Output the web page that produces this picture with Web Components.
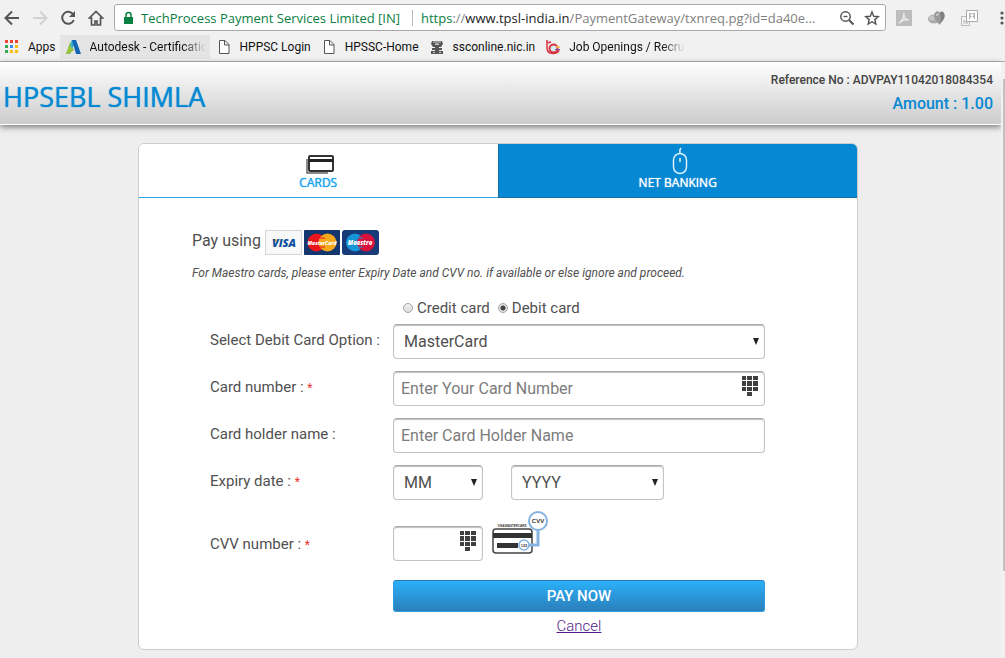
<!DOCTYPE html>
<html lang="en">
<head>
<meta charset="utf-8">
<title>HPSEBL SHIMLA - Payment</title>
<style>
  body {
    margin: 0;
    min-height: 100vh;
    display: flex;
    flex-direction: column;
    background: #eee;
    color: #444;
    font-family: Roboto, "Liberation Sans", sans-serif;
  }
  main {
    flex: 1;
    display: flex;
  }
  .page {
    flex: 1;
    min-width: 0;
  }
</style>
</head>
<body>
  <browser-toolbar></browser-toolbar>
  <bookmarks-bar></bookmarks-bar>
  <main>
    <div class="page">
      <merchant-header>
        <span slot="name">HPSEBL SHIMLA</span>
        <span slot="reference">Reference No : ADVPAY11042018084354</span>
        <span slot="amount">Amount : 1.00</span>
      </merchant-header>
      <payment-card>
        <payment-tabs slot="tabs"></payment-tabs>
        <card-form></card-form>
      </payment-card>
    </div>
    <scroll-rail></scroll-rail>
  </main>

<script>

function define(name, html) {
  const template = document.createElement('template')
  template.innerHTML = html
  window.customElements.define(name, class extends HTMLElement {
    constructor() {
      super()
      this.attachShadow({ mode: 'open' })
      this.shadowRoot.appendChild(template.content.cloneNode(true))
    }
  })
}

// browser chrome

define('browser-toolbar', `
  <style>
    :host {
      display: flex;
      align-items: center;
      height: 35px;
      padding-left: 4px;
      background: #f1f1f1;
      overflow: hidden;
      font: 13px/20px "Open Sans", "Noto Sans", sans-serif;
    }
    button {
      display: flex;
      align-items: center;
      padding: 0;
      border: 0;
      background: none;
      font: inherit;
      color: inherit;
    }
    svg { display: block; }
    .nav { display: flex; gap: 12px; margin-right: 10px; }
    .omnibox {
      flex: 1;
      min-width: 0;
      display: flex;
      align-items: center;
      height: 25px;
      padding: 0 5px 0 6px;
      border: 1px solid #a9a9a9;
      border-radius: 3px;
      background: #fff;
    }
    .secure { gap: 5px; color: #0b8043; white-space: nowrap; }
    .line { width: 1px; height: 16px; margin: 0 8px 0 12px; background: #bbb; }
    .url {
      flex: 1;
      min-width: 0;
      color: #808080;
      white-space: nowrap;
      overflow: hidden;
      outline: 0;
    }
    .url b { font-weight: 400; color: #222; }
    .url i { font-style: normal; color: #0b8043; }
    .omnibox .zoom { margin: 0 9px 0 10px; }
    .extensions { display: flex; gap: 16px; margin-left: 10px; }
    .more { margin-left: 18px; width: 9px; overflow: hidden; }
  </style>
  <div class="nav">
    <button aria-label="Back"><svg width="16" height="18" viewBox="0 0 16 18"><path d="M15 9H2M8 2.500L1.500 9 8 15.500" fill="none" stroke="#555" stroke-width="2"/></svg></button>
    <button aria-label="Forward"><svg width="16" height="18" viewBox="0 0 16 18"><path d="M1 9h13M8 2.500L14.500 9 8 15.500" fill="none" stroke="#d2d2d2" stroke-width="2"/></svg></button>
    <button aria-label="Reload"><svg width="16" height="18" viewBox="0 0 16 18"><path d="M13.200 5.500A6 6 0 1 0 13.800 11" fill="none" stroke="#555" stroke-width="2"/><path d="M15 2v6H9z" fill="#555"/></svg></button>
    <button aria-label="Home"><svg width="16" height="18" viewBox="0 0 16 18"><path d="M3.500 9v7H7v-4h2v4h3.500V9h2L8 2.500 1.500 9z" fill="none" stroke="#555" stroke-width="1.700"/></svg></button>
  </div>
  <div class="omnibox">
    <button class="secure">
      <svg width="15" height="16" viewBox="0 0 15 16"><path d="M3 7h9v7H3z" fill="#0b8043"/><path d="M5 7V5a2.500 2.500 0 0 1 5 0v2" fill="none" stroke="#0b8043" stroke-width="1.500"/></svg>
      TechProcess Payment Services Limited [IN]
    </button>
    <span class="line"></span>
    <div class="url" role="textbox" aria-label="Address" contenteditable="true" spellcheck="false"><i>https</i>://<b>www.tpsl-india.in</b>/PaymentGateway/txnreq.pg?id=da40e...</div>
    <button class="zoom" aria-label="Zoom"><svg width="16" height="16" viewBox="0 0 16 16"><circle cx="6.500" cy="6.500" r="4.700" fill="none" stroke="#555" stroke-width="1.500"/><path d="M4.500 6.500h4" stroke="#555" stroke-width="1.300"/><path d="M10 10l4.500 4.500" stroke="#555" stroke-width="2"/></svg></button>
    <button aria-label="Bookmark this page"><svg width="16" height="16" viewBox="0 0 16 16"><path d="M8 2l1.700 4.300 4.600.3-3.500 3 1.100 4.500L8 11.700l-3.900 2.400 1.100-4.500-3.500-3 4.600-.3z" fill="none" stroke="#555" stroke-width="1.400"/></svg></button>
  </div>
  <div class="extensions">
    <button aria-label="PDF"><svg width="16" height="16"><path d="M0 0h16v16H0z" fill="#bdbdbd"/><path d="M3 13c3-2 5-6 5-10-1 4 2 7 5 7-3-1-7 0-10 3z" fill="none" stroke="#f4f4f4" stroke-width="1.200"/></svg></button>
    <button aria-label="Download"><svg width="17" height="16" viewBox="0 0 17 16"><ellipse cx="6" cy="9" rx="6" ry="4.500" fill="#aaa"/><ellipse cx="5" cy="8" rx="4" ry="2.500" fill="#c4c4c4"/><path d="M11.500 15C10 12 6 10 6 6c0-5 5-6 5.500-3C13 0 17 2 16.500 6c0 4-4 6-5 9z" fill="#9a9a9a"/><path d="M8 6c0-2 2-3 3-2-1 1-2 2-3 2z" fill="#ddd"/><path d="M12 4c2 3 1 7-.5 11 1-3 5-5 5-9C17 2 13 0 12 4z" fill="#808080"/></svg></button>
    <button aria-label="Contacts"><svg width="17" height="16" viewBox="0 0 17 16"><path d="M.5 6.500h8v9h-8z" fill="#f4f4f4" stroke="#bbb"/><path d="M3 14v-4l3 4v-4" fill="none" stroke="#bbb"/><path d="M5.500.5h11v11h-11z" fill="#fff" stroke="#aaa"/><path d="M8 3h6v6H8z" fill="#b5b5b5"/><circle cx="11" cy="5" r="1.500" fill="#fff"/><path d="M9 9c0-3 4-3 4 0z" fill="#fff"/></svg></button>
  </div>
  <button class="more" aria-label="Menu"><svg width="16" height="16"><g fill="#555"><circle cx="6" cy="3" r="1.600"/><circle cx="6" cy="8" r="1.600"/><circle cx="6" cy="13" r="1.600"/></g></svg></button>
`)

define('bookmark-link', `
  <style>
    :host { display: block; }
    a {
      display: flex;
      align-items: center;
      gap: 8px;
      height: 24px;
      padding: 0 4px 0 6px;
      color: #111;
      text-decoration: none;
    }
    :host([active]) a { background: #e4e4e4; }
    :host([clip]) .text {
      width: 116px;
      overflow: hidden;
      -webkit-mask-image: linear-gradient(to right, #000 80%, transparent);
      mask-image: linear-gradient(to right, #000 80%, transparent);
    }
    .text { white-space: nowrap; }
  </style>
  <a href="#"><slot name="icon"></slot><span class="text"><slot></slot></span></a>
`)

define('bookmarks-bar', `
  <style>
    :host {
      display: flex;
      height: 26px;
      background: #f1f1f1;
      border-bottom: 1px solid #b3b3b3;
      overflow: hidden;
      font: 12px/16px Roboto, "Noto Sans", sans-serif;
    }
    svg { display: block; width: 16px; height: 16px; }
    bookmark-link:first-of-type { margin-left: -2px; }
  </style>
  <bookmark-link>
    <svg slot="icon" viewBox="0 0 16 16"><path d="M1 1h3v3H1zM6 1h3v3H6zM11 1h3v3h-3z" fill="#ea4335"/><path d="M1 6h3v3H1zM1 11h3v3H1z" fill="#34a853"/><path d="M6 6h3v3H6z" fill="#4285f4"/><path d="M6 11h3v3H6z" fill="#fbbc05"/><path d="M11 6h3v3h-3zM11 11h3v3h-3z" fill="#fbbc05"/></svg>
    Apps
  </bookmark-link>
  <bookmark-link active clip>
    <svg slot="icon" viewBox="0 0 16 16"><path d="M0 15L6 1h4L4 15z" fill="#1f9ad6"/><path d="M4 3L0 15h3l5-4z" fill="#9ac43c"/><path d="M6 1h4l5 14h-5z" fill="#1565b5"/><path d="M6 1l-2 6 3 3z" fill="#3cb6c8"/></svg>
    Autodesk - Certification
  </bookmark-link>
  <bookmark-link>
    <svg slot="icon" viewBox="0 0 16 16"><path d="M3.500 1.500H9l4 4v9H3.500zM8.500 1.500v4.500H13" fill="#fff" stroke="#555"/></svg>
    HPPSC Login
  </bookmark-link>
  <bookmark-link>
    <svg slot="icon" viewBox="0 0 16 16"><path d="M3.500 1.500H9l4 4v9H3.500zM8.500 1.500v4.500H13" fill="#fff" stroke="#555"/></svg>
    HPSSC-Home
  </bookmark-link>
  <bookmark-link>
    <svg slot="icon" viewBox="0 0 16 16"><path d="M3 2h10l1 3-2 3H4L2 5zM3 9h10v2H3zM2 12h12v3H2zM6 8h4v5H6z" fill="#555"/><path d="M4 3h2M10 3h2M6 5.500h4M4 13.500h2M10 13.500h2M7 2v3M9 2v3" stroke="#ccc"/></svg>
    ssconline.nic.in
  </bookmark-link>
  <bookmark-link clip>
    <svg slot="icon" viewBox="0 0 16 16"><path d="M2 1v8c0 7 11 7 12 2M2 4l4-1" fill="none" stroke="#d8343f" stroke-width="1.500"/><circle cx="8.500" cy="9.500" r="4" fill="#d5edf5" stroke="#d8343f" stroke-width="2"/><path d="M11 8h4" stroke="#eec04a" stroke-width="1.500"/><path d="M10 10.500h5" stroke="#7c5aa8"/></svg>
    Job Openings / Recruitment
  </bookmark-link>
`)

define('scroll-rail', `
  <style>
    :host {
      display: block;
      width: 4px;
      background: #f1f1f1;
    }
    .track { height: calc(100% - 17px); padding: 17px 0 0 2px; }
    .thumb { height: 85%; background: #c1c1c1; }
  </style>
  <div class="track"><div class="thumb"></div></div>
`)

// payment page

define('merchant-header', `
  <style>
    :host {
      display: flex;
      justify-content: space-between;
      align-items: center;
      height: 62px;
      padding: 0 8px 0 3px;
      background: linear-gradient(#fff, #ccc);
      border-bottom: 1px solid #fff;
      box-shadow: 0 2px 6px rgba(0, 0, 0, .5);
    }
    h1 {
      margin: 8px 0 0;
      font: 400 27px/36px "Open Sans", sans-serif;
      color: #0788d3;
      text-shadow: 0 0 1px #0788d3;
    }
    .info { padding-top: 2px; text-align: right; font-weight: 500; }
    .reference { font-size: 12px; line-height: 20px; }
    .amount { font-size: 16px; line-height: 28px; color: #0788d3; }
  </style>
  <h1><slot name="name"></slot></h1>
  <div class="info">
    <div class="reference"><slot name="reference"></slot></div>
    <div class="amount"><slot name="amount"></slot></div>
  </div>
`)

define('payment-card', `
  <style>
    :host {
      display: block;
      padding: 18px 5px 8px 0;
    }
    section {
      box-sizing: border-box;
      max-width: 720px;
      margin: 0 auto;
      border: 1px solid #ccc;
      border-radius: 6px;
      background: #fff;
      overflow: hidden;
    }
    .body { padding: 28px 92px 13px 53px; }
  </style>
  <section>
    <slot name="tabs"></slot>
    <div class="body"><slot></slot></div>
  </section>
`)

define('payment-tabs', `
  <style>
    :host { display: flex; }
    button {
      flex: 1;
      display: flex;
      flex-direction: column;
      align-items: center;
      justify-content: flex-end;
      height: 54px;
      padding: 0 0 6px;
      border: 0;
      border-bottom: 1px solid #2aa5ea;
      background: #fff;
      color: #1ba1ec;
      font: 400 12px/16px "Open Sans", sans-serif;
      text-shadow: 0 0 1px currentColor;
    }
    button[aria-selected=false] {
      background: #0788d3;
      border-left: 1px solid #1a6ea3;
      border-bottom-color: #1a6ea3;
      color: #fff;
    }
    svg { display: block; margin-left: 4px; }
  </style>
  <button role="tab" aria-selected="true">
    <svg width="30" height="22" viewBox="0 0 30 22"><path d="M2 6v14h21" fill="none" stroke="#666" stroke-width="1.500"/><rect x="4" y="3" width="24" height="15" rx="1" fill="#fff" stroke="#333" stroke-width="2"/><path d="M4 7.500h24" stroke="#222" stroke-width="3"/></svg>
    CARDS
  </button>
  <button role="tab" aria-selected="false">
    <svg width="20" height="28" viewBox="0 0 20 28"><rect x="3.500" y="6.500" width="13" height="20" rx="6.500" fill="none" stroke="#d9effc" stroke-width="1.500"/><path d="M10 6c0-3-1-3 1-5M10 11v4" fill="none" stroke="#e6f5fe" stroke-width="1.500"/></svg>
    NET BANKING
  </button>
`)

define('card-logos', `
  <style>
    :host { display: flex; gap: 2px; }
    svg { display: block; }
    text { font-family: "Open Sans", sans-serif; font-style: italic; font-weight: 800; text-anchor: middle; }
  </style>
  <svg width="37" height="25" viewBox="0 0 37 25"><rect x=".5" y=".5" width="36" height="24" fill="#f8f8f8" stroke="#d5d5d5"/><path d="M7 9h4l2 4z" fill="#f0a821"/><text x="19" y="17" font-size="11" fill="#0d4f9e">VISA</text></svg>
  <svg width="36" height="25" viewBox="0 0 36 25"><rect width="36" height="25" rx="1" fill="#13366f"/><circle cx="12.500" cy="12.500" r="9" fill="#e9151c"/><circle cx="23.500" cy="12.500" r="9" fill="#f6a81c"/><path d="M15 8h6M15 17h6" stroke="#e9151c"/><text x="18" y="15" font-size="5" fill="#fff">MasterCard</text></svg>
  <svg width="37" height="25" viewBox="0 0 37 25"><rect width="37" height="25" rx="3" fill="#173a78"/><circle cx="13" cy="12.500" r="9" fill="#1596d8"/><circle cx="24" cy="12.500" r="9" fill="#d8123b"/><path d="M15 8h6M15 17h6" stroke="#1596d8"/><text x="18" y="15" font-size="6" fill="#fff">Maestro</text></svg>
`)

define('keypad-button', `
  <style>
    :host { display: block; }
    button { display: block; padding: 0; border: 0; background: none; }
    svg { display: block; }
  </style>
  <button type="button" aria-label="Open keypad">
    <svg width="16" height="20" viewBox="0 0 16 20"><path d="M0 0h4v4H0zM5 0h5v4H5zM11 0h5v4h-5zM0 5h4v5H0zM5 5h5v5H5zM11 5h5v5h-5zM0 11h4v4H0zM5 11h5v4H5zM11 11h5v4h-5zM5 16h5v4H5z" fill="#3f3f3f"/></svg>
  </button>
`)

define('cvv-hint', `
  <style>
    :host { display: block; }
    svg { display: block; }
    text { font-family: "Liberation Sans", sans-serif; font-weight: bold; text-anchor: middle; fill: #333; }
  </style>
  <svg width="58" height="44" viewBox="0 0 58 44">
    <rect x="2" y="18" width="39" height="24" rx="3" fill="#fff" stroke="#444" stroke-width="1.500"/>
    <path d="M2 22h39v5H2zM6 32h21v5H6z" fill="#333"/>
    <text x="21" y="16" font-size="3">VISA/MASTERCARD</text>
    <path d="M47 18v16h-9" fill="none" stroke="#84b3e2" stroke-width="3"/>
    <circle cx="33" cy="34" r="5" fill="#fff" stroke="#84b3e2" stroke-width="1.500"/>
    <text x="33" y="36" font-size="4">123</text>
    <circle cx="47" cy="10" r="9" fill="#fff" stroke="#84b3e2" stroke-width="2"/>
    <text x="47" y="12" font-size="6">CVV</text>
  </svg>
`)

define('form-row', `
  <style>
    :host {
      display: grid;
      grid-template-columns: 183px 1fr;
      align-items: center;
      padding-left: 18px;
    }
    .label { padding-bottom: 3px; }
    .control { display: flex; align-items: flex-end; }
  </style>
  <div class="label"><slot name="label"></slot></div>
  <div class="control"><slot></slot></div>
`)

define('card-form', `
  <style>
    :host { display: block; font-size: 15px; line-height: 20px; color: #505050; }
    .using { display: flex; align-items: flex-start; gap: 4px; margin-top: 4px; line-height: 22px; font-size: 16px; }
    .note { margin: 9px 0 16px; font-size: 12px; line-height: 18px; font-style: italic; }
    form { display: flex; flex-direction: column; gap: 12px; }
    .kind { display: flex; align-items: center; gap: 4px; padding-left: 10px; margin-bottom: -6px; }
    .kind label { margin-right: 4px; }
    input[type=radio] {
      appearance: none;
      width: 10px;
      height: 10px;
      margin: 0;
      border: 1px solid #a3a3a3;
      border-radius: 50%;
      background: linear-gradient(#eee, #ddd);
    }
    input[type=radio]:checked { background: radial-gradient(#444 0 2px, #e5e5e5 3px); }
    .box { position: relative; flex: 1; }
    .short { flex: 0 0 90px; }
    .year { flex: 0 0 153px; margin-left: 28px; }
    input[type=text], select {
      appearance: none;
      display: block;
      box-sizing: border-box;
      width: 100%;
      height: 35px;
      margin: 0;
      padding: 0 7px;
      border: 1px solid #c4c4c4;
      border-top-color: #a8a8a8;
      border-radius: 4px;
      background: #fff;
      box-shadow: inset 0 1px 1px rgba(0, 0, 0, .25);
      color: #505050;
      font: inherit;
      font-size: 16px;
    }
    select { padding: 0 10px; }
    ::placeholder { color: #7c7c7c; opacity: 1; }
    .arrow { position: absolute; right: 6px; top: 14px; pointer-events: none; }
    keypad-button { position: absolute; right: 7px; top: 5px; }
    .cvv { margin-top: -1px; }
    .cvv label { display: block; margin-top: 20px; }
    cvv-hint { margin: 0 0 6px 8px; }
    .req { font-size: 12px; color: #e33; }
    .actions { text-align: center; padding: 7px 0 0 201px; }
    .pay {
      display: block;
      width: 100%;
      height: 32px;
      margin-bottom: 4px;
      border: 1px solid #2b7cb5;
      border-color: #2b7cb5 #2d9de0 #2d9de0;
      border-radius: 3px;
      background: linear-gradient(#2bb0f9, #2b7fba);
      color: #fff;
      font: 500 15px/20px Roboto, sans-serif;
    }
    a { font-size: 15px; color: #551a8b; font-weight: 300; }
  </style>
  <div class="using">Pay using <card-logos></card-logos></div>
  <p class="note">For Maestro cards, please enter Expiry Date and CVV no. if available or else ignore and proceed.</p>
  <form>
    <form-row>
      <div class="kind">
        <input type="radio" name="kind" id="credit"><label for="credit">Credit card</label>
        <input type="radio" name="kind" id="debit" checked><label for="debit">Debit card</label>
      </div>
    </form-row>
    <form-row>
      <label slot="label" for="option">Select Debit Card Option :</label>
      <div class="box">
        <select id="option"><option>MasterCard</option><option>Visa</option><option>Maestro</option></select>
        <svg class="arrow" width="6" height="7"><path d="M0 0h6L3 7z" fill="#222"/></svg>
      </div>
    </form-row>
    <form-row>
      <label slot="label" for="number">Card number : <span class="req">*</span></label>
      <div class="box">
        <input type="text" id="number" placeholder="Enter Your Card Number">
        <keypad-button></keypad-button>
      </div>
    </form-row>
    <form-row>
      <label slot="label" for="holder">Card holder name :</label>
      <div class="box"><input type="text" id="holder" placeholder="Enter Card Holder Name"></div>
    </form-row>
    <form-row>
      <label slot="label" for="month">Expiry date : <span class="req">*</span></label>
      <div class="box short">
        <select id="month"><option>MM</option></select>
        <svg class="arrow" width="6" height="7"><path d="M0 0h6L3 7z" fill="#222"/></svg>
      </div>
      <div class="box year">
        <select id="year" aria-label="Expiry year"><option>YYYY</option></select>
        <svg class="arrow" width="6" height="7"><path d="M0 0h6L3 7z" fill="#222"/></svg>
      </div>
    </form-row>
    <form-row class="cvv">
      <label slot="label" for="cvv">CVV number : <span class="req">*</span></label>
      <div class="box short">
        <input type="text" id="cvv">
        <keypad-button></keypad-button>
      </div>
      <cvv-hint></cvv-hint>
    </form-row>
    <div class="actions">
      <button type="button" class="pay">PAY NOW</button>
      <a href="#">Cancel</a>
    </div>
  </form>
`)

</script>
</body>
</html>
